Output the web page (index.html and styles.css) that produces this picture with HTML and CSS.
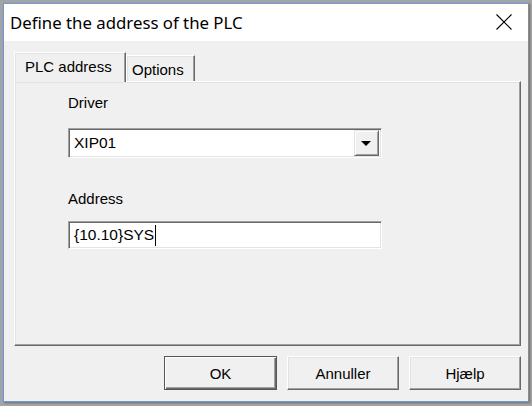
FILE: index.html
```html
<!DOCTYPE html>
<html>
<head>
<meta charset="utf-8">
<link rel="stylesheet" href="styles.css">
</head>
<body>
<div class="window">
  <div class="titlebar">
    <span class="title">Define the address of the PLC</span>
    <svg class="close" width="16" height="16" viewBox="0 0 16 16"><path d="M0.5 0.5 L15.5 15.5 M15.5 0.5 L0.5 15.5" stroke="#000" stroke-width="1.1" fill="none"/></svg>
  </div>
  <div class="content">
    <div class="tabs">
      <div class="tab active">PLC address</div>
      <div class="tab">Options</div>
    </div>
    <div class="panel">
      <div class="label">Driver</div>
      <div class="combo">
        <span class="combo-text">XIP01</span>
        <span class="combo-btn"><svg width="10" height="5" viewBox="0 0 10 5"><polygon points="0,0 10,0 5,5" fill="#000"/></svg></span>
      </div>
      <div class="label label-address">Address</div>
      <div class="field"><span>{10.10}SYS</span><span class="caret"></span></div>
    </div>
    <div class="buttons">
      <div class="btn default">OK</div>
      <div class="btn">Annuller</div>
      <div class="btn">Hjælp</div>
    </div>
  </div>
</div>
</body>
</html>
```
FILE: styles.css
```css
html, body {
  margin: 0;
  padding: 0;
}
body {
  background: #a4a4a4;
  width: 532px;
  height: 406px;
  overflow: hidden;
  font-family: "Liberation Sans", Arial, sans-serif;
  font-size: 15px;
  color: #000;
}
.window {
  margin: 3px 0 0 3px;
  width: 524px;
  height: 397px;
  border: 1px solid #6a9ad8;
  border-right-color: #8c8c8c;
  background: #f0f0f0;
  box-shadow: 1px 1px 2px rgba(0,0,0,0.35);
  display: flex;
  flex-direction: column;
}
.titlebar {
  height: 37px;
  background: #fff;
  display: flex;
  align-items: center;
  justify-content: space-between;
  padding: 0 16px 0 6px;
  flex: none;
}
.title {
  font-family: "Noto Sans", sans-serif;
  font-size: 16.8px;
  color: #000;
}
.close {
  display: block;
  margin-top: -1px;
}
.content {
  padding: 11px 7px 0 10px;
  flex: 1;
}
.tabs {
  display: flex;
  height: 30px;
  margin-bottom: -1px;
  position: relative;
  z-index: 2;
}
.tab {
  box-sizing: border-box;
  background: #f0f0f0;
  border-top: 1px solid #fff;
  border-left: 1px solid #fff;
  border-right: 1px solid #696969;
  box-shadow: inset -1px 0 #a0a0a0, inset 1px 1px #e3e3e3;
  width: 69px;
  height: 26px;
  margin-top: 3px;
  padding: 5px 0 0 5px;
  line-height: 17px;
  white-space: nowrap;
}
.tab.active {
  width: 112px;
  height: 30px;
  margin-top: 0;
  padding: 5px 0 0 10px;
}
.panel {
  box-sizing: border-box;
  height: 265px;
  border-top: 1px solid #fff;
  border-left: 1px solid #fff;
  border-right: 1px solid #696969;
  border-bottom: 1px solid #696969;
  box-shadow: inset -1px -1px #a0a0a0, inset 1px 1px #e3e3e3;
  padding: 12px 0 0 53px;
  position: relative;
  z-index: 1;
}
.label {
  line-height: 18px;
  height: 18px;
}
.label-address {
  margin-top: 32px;
}
.combo, .field {
  box-sizing: border-box;
  width: 314px;
  background: #fff;
  border-top: 1px solid #a0a0a0;
  border-left: 1px solid #a0a0a0;
  border-right: 1px solid #fff;
  border-bottom: 1px solid #fff;
  box-shadow: inset 1px 1px #696969, inset -1px -1px #e3e3e3;
  display: flex;
  align-items: center;
}
.combo {
  height: 30px;
  margin-top: 16px;
  padding: 2px 2px 2px 5px;
}
.combo-text {
  flex: 1;
  font-size: 15.5px;
}
.combo-btn {
  box-sizing: border-box;
  width: 25px;
  height: 26px;
  background: #f0f0f0;
  border-top: 1px solid #e3e3e3;
  border-left: 1px solid #e3e3e3;
  border-right: 1px solid #696969;
  border-bottom: 1px solid #696969;
  box-shadow: inset 1px 1px #fff, inset -1px -1px #a0a0a0;
  display: flex;
  align-items: center;
  justify-content: center;
  padding-right: 2px;
}
.combo-btn svg {
  display: block;
}
.field {
  height: 28px;
  margin-top: 13px;
  padding: 0 3px 0 5px;
  font-size: 15.5px;
}
.caret {
  display: inline-block;
  width: 1px;
  height: 21px;
  background: #000;
  margin-left: 1px;
}
.buttons {
  display: flex;
  justify-content: flex-end;
  gap: 10px;
  margin-top: 10px;
}
.btn {
  box-sizing: border-box;
  width: 112px;
  height: 34px;
  background: #f0f0f0;
  border-top: 1px solid #fff;
  border-left: 1px solid #fff;
  border-right: 1px solid #696969;
  border-bottom: 1px solid #696969;
  box-shadow: inset -1px -1px #a0a0a0, inset 1px 1px #e3e3e3;
  display: flex;
  align-items: center;
  justify-content: center;
}
.btn.default {
  border: 1px solid #555;
  box-shadow: inset 1px 1px #fff, inset -1px -1px #696969, inset -2px -2px #a0a0a0;
  width: 113px;
}
```
